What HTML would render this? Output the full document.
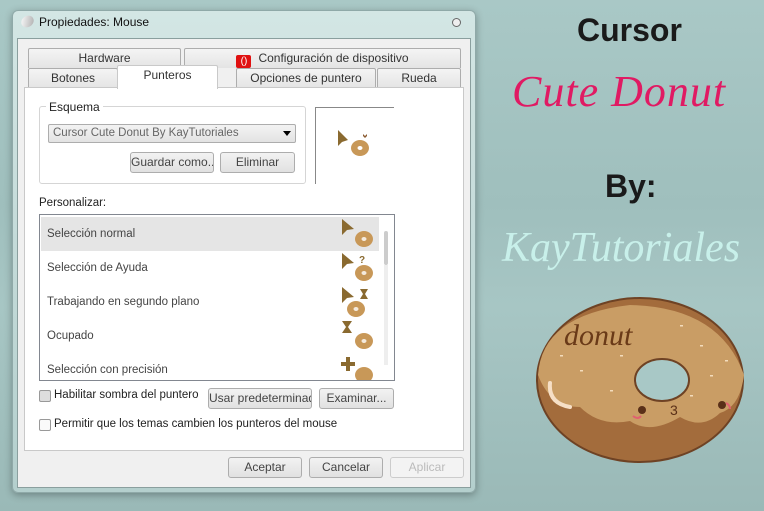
<!DOCTYPE html>
<html><head><meta charset="utf-8"><style>
*{margin:0;padding:0;box-sizing:border-box}
body{width:764px;height:511px;overflow:hidden;position:relative;font-family:"Liberation Sans",sans-serif;font-size:11px;color:#222;
background:linear-gradient(180deg,#a9c8c6 0%,#9fbfbd 40%,#a7c6c4 60%,#9ab9b7 100%)}
.a{position:absolute}
.win{left:12px;top:10px;width:464px;height:483px;border-radius:6px;background:linear-gradient(180deg,#d3e6e4,#b4cfcd);border:1px solid #8fa9a8;box-shadow:0 2px 8px rgba(0,0,0,.3)}
.client{left:17px;top:38px;width:454px;height:450px;background:#f0f0f0;border:1px solid #8a9f9e}
.tab{position:absolute;height:20px;border:1px solid #adadad;border-bottom:none;background:linear-gradient(#f4f4f4,#e4e4e4);text-align:center;line-height:19px;font-size:12px;color:#333;border-radius:2px 2px 0 0}
.panel{left:24px;top:87px;width:440px;height:364px;background:#fff;border:1px solid #c9c9c9}
.btn{position:absolute;height:21px;border:1px solid #adadad;border-radius:3px;background:linear-gradient(#f2f2f2,#e1e1e1);text-align:center;line-height:19px;font-size:12px;color:#444;overflow:hidden;white-space:nowrap}
.row{position:absolute;left:1px;width:338px;height:34px;line-height:34px;padding-left:6px;font-size:11.5px;color:#444}
.cb{position:absolute;width:12px;height:12px;border:1px solid #999;border-radius:2px;background:#fafafa}
</style></head><body>
<div class="a win"></div>
<div class="a" style="left:21px;top:16px;width:13px;height:11px;border-radius:50%;background:linear-gradient(135deg,#fff,#aaa);transform:rotate(-35deg)"></div>
<div class="a" style="left:39px;top:15px;font-size:12px;color:#111">Propiedades: Mouse</div>
<div class="a" style="left:452px;top:18px;width:9px;height:9px;border:1px solid #666;border-radius:50%;background:#eee"></div>
<div class="a client"></div>
<div class="tab" style="left:28px;top:48px;width:153px">Hardware</div>
<div class="tab" style="left:184px;top:48px;width:277px"><span style="display:inline-block;width:15px;height:13px;background:#e01010;vertical-align:-2px;margin-right:7px;border-radius:2px;color:#fff;font-size:10px;line-height:13px">()</span>Configuración de dispositivo</div>
<div class="tab" style="left:28px;top:68px;width:90px">Botones</div>
<div class="tab" style="left:236px;top:68px;width:140px">Opciones de puntero</div>
<div class="tab" style="left:377px;top:68px;width:84px">Rueda</div>
<div class="a panel"></div>
<div class="tab" style="left:117px;top:65px;width:101px;height:24px;background:#fff;border-color:#c9c9c9;line-height:18px">Punteros</div>
<div class="a" style="left:39px;top:106px;width:267px;height:78px;border:1px solid #d5d5d5;border-radius:3px"></div>
<div class="a" style="left:46px;top:100px;background:#fff;padding:0 3px;font-size:12px">Esquema</div>
<div class="a" style="left:48px;top:124px;width:248px;height:19px;border:1px solid #adadad;border-radius:2px;background:linear-gradient(#f3f3f3,#e3e3e3);font-size:11.5px;color:#666;line-height:17px;padding-left:4px">Cursor Cute Donut By KayTutoriales<span style="position:absolute;right:4px;top:6px;border:4px solid transparent;border-top:5px solid #000"></span></div>
<div class="btn" style="left:130px;top:152px;width:84px">Guardar como..</div>
<div class="btn" style="left:220px;top:152px;width:75px">Eliminar</div>
<div class="a" style="left:315px;top:107px;width:79px;height:77px;border-left:1px solid #888;border-top:1px solid #888;background:#fff"></div>
<svg class="a" style="left:336px;top:128px" width="36" height="30"><path d="M2 2L2 18L6 14L12 12Z" fill="#8a6a30"/><ellipse cx="24" cy="20" rx="9" ry="8" fill="#c89858"/><ellipse cx="24" cy="20" rx="2.5" ry="2" fill="#fff"/><path d="M27 6l2 2 2-2v2l-2 2-2-2z" fill="#8a5a30"/></svg>
<div class="a" style="left:39px;top:197px;font-size:11.5px">Personalizar:</div>
<div class="a" style="left:39px;top:214px;width:356px;height:167px;border:1px solid #828790;background:#fff;overflow:hidden">
<div class="row" style="top:2px;background:#e5e5e5">Selección normal</div>
<div class="row" style="top:36px">Selección de Ayuda</div>
<div class="row" style="top:70px">Trabajando en segundo plano</div>
<div class="row" style="top:104px">Ocupado</div>
<div class="row" style="top:138px">Selección con precisión</div>
<div class="a" style="left:344px;top:16px;width:4px;height:34px;background:#ccc;border-radius:2px"></div>
<div class="a" style="left:344px;top:50px;width:4px;height:100px;background:#eee"></div>
<svg class="a" style="left:300px;top:2px" width="38" height="165">
<g fill="#8a6a30"><path d="M2 2L2 18L7 13L14 12Z"/><path d="M2 36L2 52L7 47L14 46Z"/><path d="M2 70L2 86L7 81L14 80Z"/><path d="M2 104h10l-4 6 4 6H2l4-6z"/><path d="M6 140h4v5h5v4h-5v5H6v-5H1v-4h5z"/><path d="M20 72h8l-3 5 3 5h-8l3-5z"/><text x="19" y="46" font-size="10" font-weight="bold" font-family="Liberation Sans">?</text></g>
<g fill="#c89858"><ellipse cx="24" cy="22" rx="9" ry="8"/><ellipse cx="24" cy="56" rx="9" ry="8"/><ellipse cx="16" cy="92" rx="9" ry="8"/><ellipse cx="24" cy="124" rx="9" ry="8"/><ellipse cx="24" cy="158" rx="9" ry="8"/></g>
<g fill="#fff" opacity=".8"><ellipse cx="24" cy="22" rx="2.5" ry="2"/><ellipse cx="24" cy="56" rx="2.5" ry="2"/><ellipse cx="16" cy="92" rx="2.5" ry="2"/><ellipse cx="24" cy="124" rx="2.5" ry="2"/></g>
</svg>
</div>
<div class="cb" style="left:39px;top:390px;background:#ddd"></div>
<div class="a" style="left:54px;top:389px;font-size:11.5px">Habilitar sombra del puntero</div>
<div class="btn" style="left:208px;top:388px;width:104px">Usar predeterminado</div>
<div class="btn" style="left:319px;top:388px;width:75px">Examinar...</div>
<div class="cb" style="left:39px;top:419px"></div>
<div class="a" style="left:54px;top:418px;font-size:11.5px">Permitir que los temas cambien los punteros del mouse</div>
<div class="btn" style="left:228px;top:457px;width:74px">Aceptar</div>
<div class="btn" style="left:309px;top:457px;width:74px">Cancelar</div>
<div class="btn" style="left:390px;top:457px;width:74px;color:#bbb;background:#f3f3f3;border-color:#ccc">Aplicar</div>
<div class="a" style="left:577px;top:12px;font:bold 32px 'Liberation Sans Narrow','Liberation Sans',sans-serif;color:#1a1a1a">Cursor</div>
<div class="a" style="left:512px;top:66px;font:italic 44px 'Liberation Serif',serif;color:#e01a63;letter-spacing:1px">Cute Donut</div>
<div class="a" style="left:605px;top:168px;font:bold 32px 'Liberation Sans Narrow','Liberation Sans',sans-serif;color:#1a1a1a">By:</div>
<div class="a" style="left:502px;top:224px;font:italic 42px 'Liberation Serif',serif;color:#c8f0ea">KayTutoriales</div>
<svg class="a" style="left:530px;top:295px" width="225" height="180">
<ellipse cx="110" cy="85" rx="103" ry="82" fill="#a36c3c" stroke="#6e4224" stroke-width="2"/>
<path d="M8 80Q12 20 100 10Q190 12 214 80Q210 112 190 118Q172 135 150 122Q120 140 100 126Q70 132 50 112Q20 112 8 80Z" fill="#c99d65"/>
<ellipse cx="132" cy="85" rx="27" ry="21" fill="#a8c8c6" stroke="#6e4224" stroke-width="2"/>
<path d="M20 88Q18 108 40 112" stroke="#f6dfc6" stroke-width="4" fill="none" stroke-linecap="round"/>
<ellipse cx="112" cy="115" rx="4" ry="4" fill="#5a3018"/><ellipse cx="192" cy="110" rx="4" ry="4" fill="#5a3018"/>
<path d="M103 121q5 4 8 0M196 108q4 2 4 6" stroke="#e06070" stroke-width="2" fill="none"/>
<g fill="#f3dcbc"><rect x="60" y="40" width="3" height="1.5"/><rect x="90" y="60" width="3" height="1.5"/><rect x="170" y="50" width="3" height="1.5"/><rect x="180" y="80" width="3" height="1.5"/><rect x="50" y="75" width="3" height="1.5"/><rect x="150" y="30" width="3" height="1.5"/><rect x="80" y="95" width="3" height="1.5"/><rect x="160" y="100" width="3" height="1.5"/><rect x="30" y="60" width="3" height="1.5"/><rect x="195" y="65" width="3" height="1.5"/></g>
<text x="34" y="50" font-family="Liberation Serif" font-style="italic" font-size="30" fill="#6a3a18">donut</text>
<text x="140" y="120" font-size="14" fill="#5a3018" font-family="Liberation Sans">3</text>
</svg>
</body></html>
